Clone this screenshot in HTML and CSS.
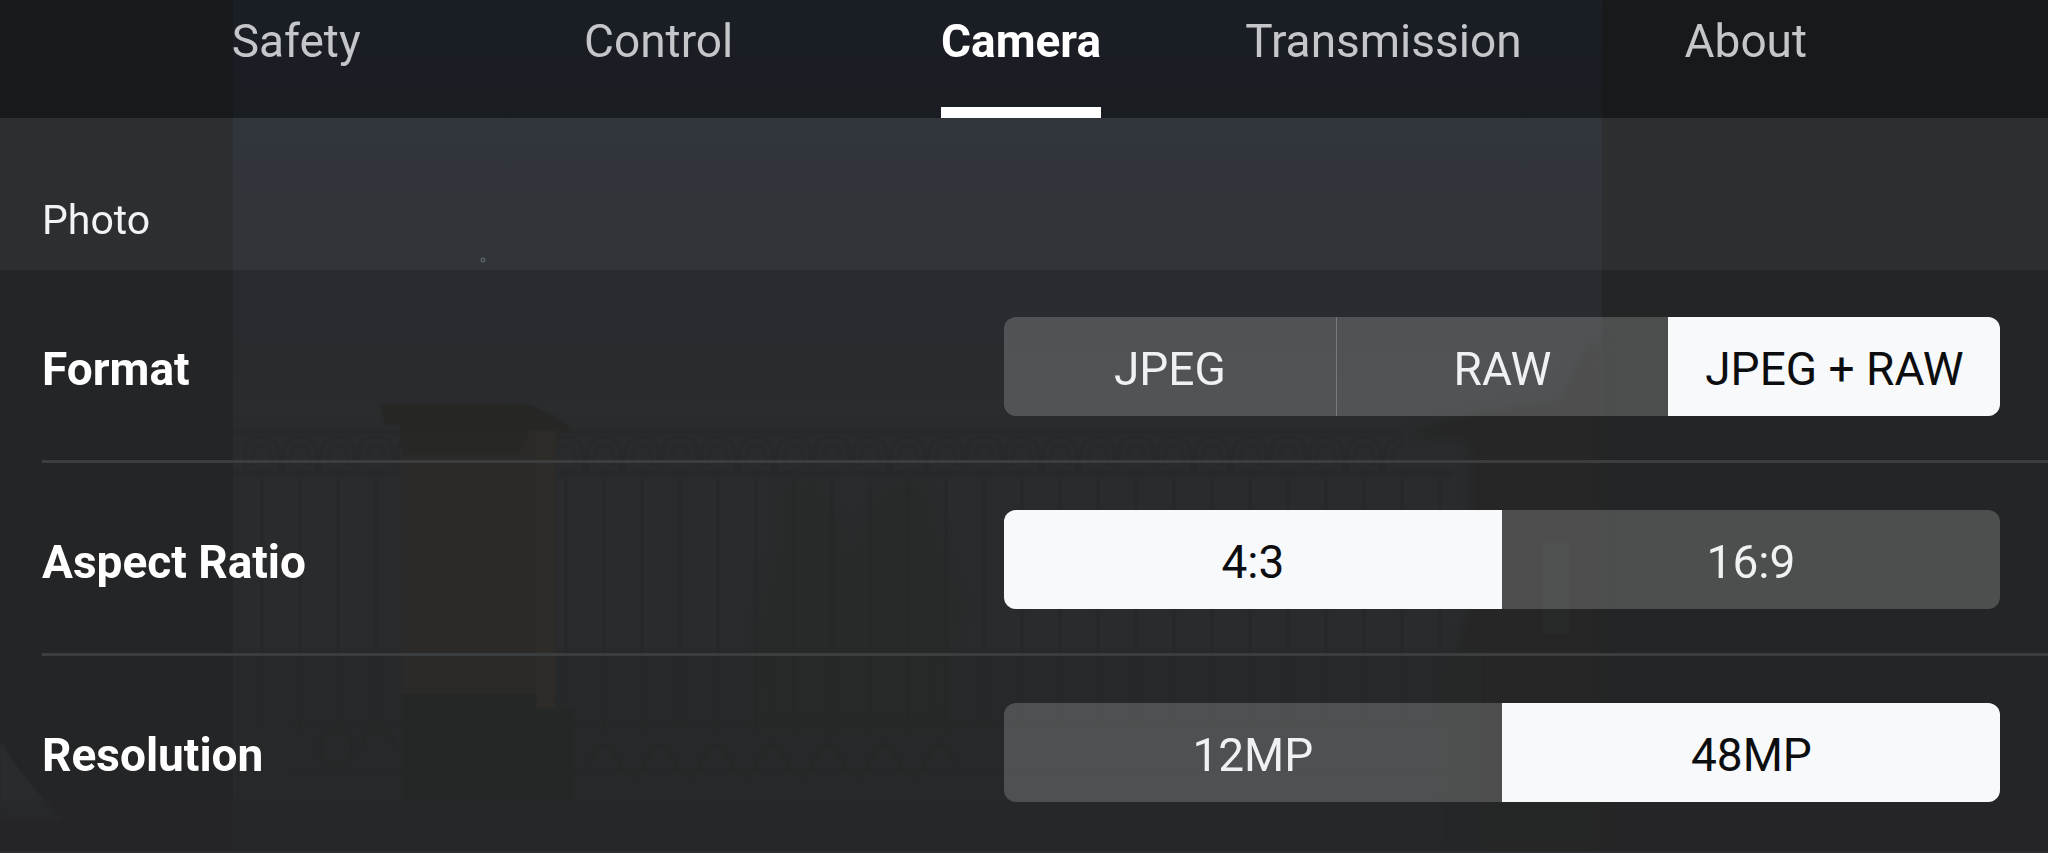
FILE: index.html
```html
<!DOCTYPE html>
<html lang="en">
<head>
    <meta charset="UTF-8">
    <meta name="viewport" content="width=device-width, initial-scale=1.0">
    <title>Camera settings</title>
    <link rel="stylesheet" href="styles.css">
</head>
<body>
    <!-- Dimmed camera view behind the settings -->
    <svg class="live-view" viewBox="0 0 2048 853" preserveAspectRatio="xMidYMid slice" aria-hidden="true">
        <defs>
            <linearGradient id="sky" x1="0" y1="0" x2="0" y2="1">
                <stop offset="0" stop-color="#282c36"/>
                <stop offset="0.4" stop-color="#282c33"/>
                <stop offset="0.75" stop-color="#282b2f"/>
                <stop offset="1" stop-color="#2a2c2e"/>
            </linearGradient>
            <pattern id="bars" width="38" height="260" patternUnits="userSpaceOnUse" x="243" y="478">
                <rect x="18" width="2" height="260" fill="#242627"/>
            </pattern>
            <pattern id="scroll" width="38" height="42" patternUnits="userSpaceOnUse" x="243" y="433">
                <path d="M2 42V20Q4 4 19 4T36 20V42M9 32Q9 12 19 12T29 32" fill="none" stroke="#252729" stroke-width="2"/>
            </pattern>
            <filter id="soft" color-interpolation-filters="sRGB">
                <feGaussianBlur stdDeviation="1"/>
            </filter>
            <filter id="softer" color-interpolation-filters="sRGB">
                <feGaussianBlur stdDeviation="6"/>
            </filter>
        </defs>
        <rect width="2048" height="853" fill="#242526"/>
        <rect x="233" width="1369" height="415" fill="url(#sky)"/>
        <rect x="233" y="415" width="1250" height="438" fill="#2a2b2d"/>
        <g filter="url(#softer)">
            <path d="M1602 340V853H1450V690L1470 600V440L1400 436L1480 412L1560 400L1590 340Z" fill="#252625"/>
            <path d="M780 490L815 476L838 520L850 560L880 490L925 480L945 560L965 610L940 680L950 730H760L758 620L775 560Z" fill="#282a29"/>
        </g>
        <g filter="url(#soft)">
            <rect x="243" y="433" width="1160" height="42" fill="url(#scroll)"/>
            <rect x="233" y="431" width="1170" height="3" fill="#26282a"/>
            <rect x="233" y="471" width="1220" height="5" fill="#26282a"/>
            <rect x="233" y="478" width="1220" height="250" fill="url(#bars)"/>
            <rect x="233" y="650" width="1250" height="203" fill="#262828" opacity="0.7"/>
            <g fill="none" stroke="#252727" stroke-width="2">
                <path d="M290 726H1480M290 770H1480"/>
                <path d="M320 748q0-16 16-16t16 16-16 16-16-16M362 748q0-16 16-16t16 16M590 760q14-30 28 0t28 0 28 0 28 0 28 0 28 0 28 0 28 0 28 0 28 0 28 0 28 0 28 0"/>
            </g>
            <path d="M380 404H520Q550 408 574 432H560V443H400V424H385Z" fill="#262725"/>
            <rect x="402" y="430" width="155" height="264" fill="#2b2a28"/>
            <path d="M402 430H530L518 455H402Z" fill="#272726"/>
            <rect x="536" y="432" width="18" height="276" fill="#2e2c29"/>
            <path d="M402 694H536V710H574V800H402Z" fill="#252626"/>
            <rect x="1542" y="542" width="28" height="92" fill="#282929"/>
            <path d="M0 740L24 776L62 820H0Z" fill="#2a2b2e"/>
            <rect y="800" width="2048" height="53" fill="#262728" opacity="0.6"/>
        </g>
        <circle cx="483" cy="260" r="2" fill="none" stroke="#6c7078"/>
        <rect y="851" width="2048" height="2" fill="#2c2e32"/>
    </svg>

    <div class="settings">
        <nav class="tabs">
            <a href="#safety">Safety</a>
            <a href="#control">Control</a>
            <a href="#camera" class="active" aria-current="page">Camera</a>
            <a href="#transmission">Transmission</a>
            <a href="#about">About</a>
        </nav>

        <h2 class="section-title">Photo</h2>

        <div class="row" role="radiogroup" aria-labelledby="format-label">
            <span class="row-label" id="format-label">Format</span>
            <div class="segments">
                <label><input type="radio" name="format"><span>JPEG</span></label>
                <label><input type="radio" name="format"><span>RAW</span></label>
                <label><input type="radio" name="format" checked><span>JPEG + RAW</span></label>
            </div>
        </div>

        <div class="row" role="radiogroup" aria-labelledby="ratio-label">
            <span class="row-label" id="ratio-label">Aspect Ratio</span>
            <div class="segments">
                <label><input type="radio" name="ratio" checked><span>4:3</span></label>
                <label><input type="radio" name="ratio"><span>16:9</span></label>
            </div>
        </div>

        <div class="row" role="radiogroup" aria-labelledby="resolution-label">
            <span class="row-label" id="resolution-label">Resolution</span>
            <div class="segments">
                <label><input type="radio" name="resolution"><span>12MP</span></label>
                <label><input type="radio" name="resolution" checked><span>48MP</span></label>
            </div>
        </div>
    </div>
</body>
</html>
```
FILE: styles.css
```css
* {
    box-sizing: border-box;
}

body {
    margin: 0;
    background-color: #242526;
    color: #ffffff;
    font-family: Roboto, sans-serif;
    font-size: 46px;
    line-height: 56px;
}

.live-view {
    position: fixed;
    inset: 0;
    width: 100%;
    height: 100%;
}

.settings {
    position: relative;
}

.tabs {
    display: grid;
    grid-template-columns: repeat(5, 1fr);
    justify-items: center;
    padding: 0 121px 0 115px;
    background-color: rgba(0, 2, 4, 0.33);
}

.tabs a {
    padding: 13px 0 38px;
    border-bottom: 11px solid transparent;
    color: #c4c6ca;
    text-decoration: none;
}

.tabs a.active {
    border-bottom-color: #ffffff;
    color: #ffffff;
    font-weight: bold;
}

.section-title {
    margin: 0;
    padding: 74px 42px 22px;
    background-color: rgba(255, 255, 255, 0.045);
    color: #f2f3f5;
    font-size: 41px;
    font-weight: normal;
}

.row {
    display: grid;
    grid-template-columns: 28fr 29fr;
    align-items: center;
    margin-left: 42px;
    padding: 47px 48px 44px 0;
    border-bottom: 3px solid #3c3d3e;
}

.row:last-child {
    border-bottom: none;
}

.row-label {
    padding-top: 4px;
    font-weight: bold;
}

.segments {
    display: grid;
    grid-auto-flow: column;
    grid-auto-columns: 1fr;
    height: 99px;
    border-radius: 12px;
    overflow: hidden;
    background-color: rgba(255, 255, 255, 0.19);
}

.segments label {
    position: relative;
    cursor: pointer;
}

.segments input {
    position: absolute;
    opacity: 0;
}

.segments span {
    display: flex;
    align-items: center;
    justify-content: center;
    height: 100%;
    padding-top: 4px;
    color: #f0f1f3;
}

.segments label + label span {
    border-left: 1px solid #77797b;
}

.segments input:checked + span {
    border-color: #f8f9fb;
    background-color: #f8f9fb;
    color: #0c0d0f;
}

.segments label:has(:checked) + label span {
    border-left: none;
}
```
